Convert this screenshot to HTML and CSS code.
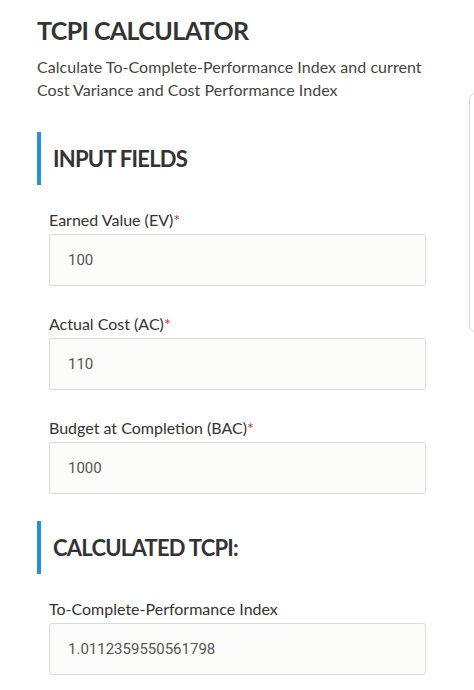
FILE: index.html
```html
<!DOCTYPE html>
<html lang="en">
<head>
    <meta charset="UTF-8">
    <meta name="viewport" content="width=device-width, initial-scale=1.0">
    <title>TCPI Calculator</title>
    <link rel="stylesheet" href="styles.css">
</head>
<body>
    <div class="page">
        <h1 class="title">TCPI CALCULATOR</h1>
        <p class="intro">Calculate To-Complete-Performance Index and current Cost Variance and Cost Performance Index</p>

        <div class="section-head"><h2>INPUT FIELDS</h2></div>

        <div class="field">
            <label for="ev">Earned Value (EV)<span class="req">*</span></label>
            <input id="ev" type="text" value="100">
        </div>
        <div class="field">
            <label for="ac">Actual Cost (AC)<span class="req">*</span></label>
            <input id="ac" type="text" value="110">
        </div>
        <div class="field">
            <label for="bac">Budget at Completion (BAC)<span class="req">*</span></label>
            <input id="bac" type="text" value="1000">
        </div>

        <div class="section-head"><h2>CALCULATED TCPI:</h2></div>

        <div class="field">
            <label for="tcpi">To-Complete-Performance Index</label>
            <input id="tcpi" type="text" value="1.0112359550561798" readonly>
        </div>
    </div>

    <!-- edge of the side panel peeking in -->
    <div class="side-edge"></div>
</body>
</html>
```

FILE: styles.css
```css
body {
    margin: 0;
    background: #fff;
    font-family: Lato, "Open Sans", sans-serif;
    color: #333;
    overflow: hidden;
}
.page { padding: 15px 48px 0 37px; }

.title {
    margin: 0;
    font-size: 25px;
    line-height: 30px;
    font-weight: 700;
    letter-spacing: -0.6px;
    color: #333;
}
.intro {
    margin: 10px 0 0;
    font-size: 16px;
    line-height: 23px;
    letter-spacing: 0.05px;
    color: #444;
}

.section-head {
    margin-top: 31px;
    height: 53px;
    border-left: 4px solid #2b8de2;
    padding-left: 12px;
    display: flex;
    align-items: center;
}
.field + .section-head { margin-top: 27px; }
.section-head h2 {
    margin: 0;
    font-size: 22px;
    font-weight: 700;
    letter-spacing: -0.75px;
    color: #333;
}

.field { margin: 25px 0 0 12px; }
.field + .field { margin-top: 28px; }
.field label {
    display: block;
    font-size: 16px;
    line-height: 20px;
    margin-bottom: 4px;
    color: #333;
}
.req { color: #d32f2f; }
.field input {
    display: block;
    box-sizing: border-box;
    width: 100%;
    height: 52px;
    padding: 0 18px;
    border: 1px solid #dcdcdc;
    border-radius: 3px;
    background: #fcfcfb;
    font-family: Roboto, sans-serif;
    font-size: 15px;
    color: #555;
    outline: none;
}

.side-edge {
    position: absolute;
    top: 93px;
    left: 469px;
    width: 20px;
    height: 239px;
    border: 1px solid #d8d8d8;
    border-radius: 6px;
    box-sizing: border-box;
}
```
